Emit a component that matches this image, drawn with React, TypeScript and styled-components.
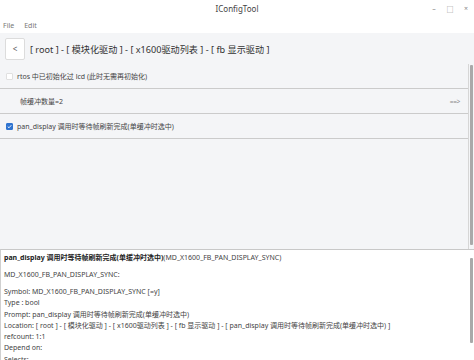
import React from "react";
import styled, { createGlobalStyle } from "styled-components";

const Global = createGlobalStyle`
  html, body { margin: 0; padding: 0; background: #ffffff; }
  body { font-family: "Noto Sans", "Noto Sans CJK SC", sans-serif; color: #333; }
  * { box-sizing: border-box; }
`;

const Window = styled.div`
  width: 474px;
  height: 360px;
  display: flex;
  flex-direction: column;
  overflow: hidden;
  background: #ffffff;
`;

const TitleBar = styled.div`
  height: 17px;
  display: flex;
  align-items: center;
  justify-content: center;
  position: relative;
  font-size: 8px;
  color: #444;
`;

const Controls = styled.div`
  position: absolute;
  right: 0;
  top: 0;
  height: 17px;
  display: flex;
  align-items: center;
`;

const Ctrl = styled.span`
  width: 16px;
  text-align: center;
  font-size: 7px;
  color: #888;
`;

const MenuBar = styled.div`
  height: 16px;
  display: flex;
  align-items: center;
  gap: 10px;
  padding-left: 3px;
  font-size: 7px;
  color: #777;
`;

const Main = styled.div`
  background: #f4f5f7;
  display: flex;
  flex-direction: column;
  height: 216px;
`;

const Crumbs = styled.div`
  height: 31px;
  display: flex;
  align-items: center;
  gap: 5px;
  padding: 0 5px;
`;

const BackButton = styled.div`
  width: 20px;
  height: 22px;
  background: #fff;
  border: 1px solid #dcdcdc;
  border-radius: 2px;
  display: flex;
  align-items: center;
  justify-content: center;
  font-size: 8px;
  color: #555;
`;

const CrumbText = styled.div`
  font-size: 9.15px;
  color: #333;
  white-space: nowrap;
`;

const ListWrap = styled.div`
  flex: 1;
  display: flex;
`;

const List = styled.div`
  flex: 1;
  border-right: 1px solid #d6d6d6;
  display: flex;
  flex-direction: column;
`;

const Row = styled.div<{ $indent?: boolean }>`
  height: 25px;
  display: flex;
  align-items: center;
  padding-left: ${(p) => (p.$indent ? "20px" : "6px")};
  padding-right: 8px;
  border-bottom: 1px solid #cbcbcb;
  font-size: 7px;
  color: #444;
  white-space: nowrap;
`;

const Check = styled.span<{ $on?: boolean }>`
  width: 7px;
  height: 7px;
  border-radius: 1px;
  margin-right: 4px;
  border: 1px solid ${(p) => (p.$on ? "#2f74d0" : "#e0e0e0")};
  background: ${(p) => (p.$on ? "#2f74d0" : "#fff")};
  display: inline-flex;
  align-items: center;
  justify-content: center;
`;

const Label = styled.span`
  flex: 1;
`;

const Arrow = styled.span`
  font-size: 6.5px;
  color: #888;
  letter-spacing: -0.3px;
`;

const Track = styled.div<{ $top: number }>`
  width: 5px;
  display: flex;
  flex-direction: column;
  padding-top: ${(p) => p.$top}px;
  padding-left: 1px;
`;

const Thumb = styled.div<{ $len: number }>`
  width: 3px;
  height: ${(p) => p.$len}px;
  background: #a9a9a9;
  border-radius: 1px;
`;

const Detail = styled.div`
  flex: 1;
  display: flex;
  background: #fff;
  border-top: 1px solid #c8c8c8;
  border-left: 1px solid #d0d0d0;
  overflow: hidden;
`;

const DetailText = styled.div`
  flex: 1;
  padding: 2px 0 0 3px;
  font-size: 7px;
  line-height: 11.3px;
  color: #444;
  white-space: nowrap;
  overflow: hidden;
`;

const Para = styled.div`
  margin-bottom: 5.7px;
`;

const Bold = styled.b`
  font-weight: 700;
  color: #222;
`;

export default function App() {
  return (
    <>
      <Global />
      <Window>
        <TitleBar>
          IConfigTool
          <Controls>
            <Ctrl>–</Ctrl>
            <Ctrl>□</Ctrl>
            <Ctrl>×</Ctrl>
          </Controls>
        </TitleBar>
        <MenuBar>
          <span>File</span>
          <span>Edit</span>
        </MenuBar>
        <Main>
          <Crumbs>
            <BackButton>&lt;</BackButton>
            <CrumbText>[ root ] - [ 模块化驱动 ] - [ x1600驱动列表 ] - [ fb 显示驱动 ]</CrumbText>
          </Crumbs>
          <ListWrap>
            <List>
              <Row>
                <Check />
                <Label>rtos 中已初始化过 lcd (此时无需再初始化)</Label>
              </Row>
              <Row $indent>
                <Label>帧缓冲数量=2</Label>
                <Arrow>==&gt;</Arrow>
              </Row>
              <Row>
                <Check $on>
                  <svg width="5" height="5" viewBox="0 0 10 10">
                    <path d="M1.5 5.2 L4 7.6 L8.6 2.4" fill="none" stroke="#fff" strokeWidth="1.8" />
                  </svg>
                </Check>
                <Label>pan_display 调用时等待帧刷新完成(单缓冲时选中)</Label>
              </Row>
            </List>
            <Track $top={1}>
              <Thumb $len={180} />
            </Track>
          </ListWrap>
        </Main>
        <Detail>
          <DetailText>
            <Para>
              <Bold>pan_display 调用时等待帧刷新完成(单缓冲时选中)</Bold>(MD_X1600_FB_PAN_DISPLAY_SYNC)
            </Para>
            <Para>MD_X1600_FB_PAN_DISPLAY_SYNC:</Para>
            <div>Symbol: MD_X1600_FB_PAN_DISPLAY_SYNC [=y]</div>
            <div>Type : bool</div>
            <div>Prompt: pan_display 调用时等待帧刷新完成(单缓冲时选中)</div>
            <div>Location: [ root ] - [ 模块化驱动 ] - [ x1600驱动列表 ] - [ fb 显示驱动 ] - [ pan_display 调用时等待帧刷新完成(单缓冲时选中) ]</div>
            <div>refcount: 1:1</div>
            <div>Depend on:</div>
            <div>Selects:</div>
          </DetailText>
          <Track $top={8}>
            <Thumb $len={85} />
          </Track>
        </Detail>
      </Window>
    </>
  );
}
